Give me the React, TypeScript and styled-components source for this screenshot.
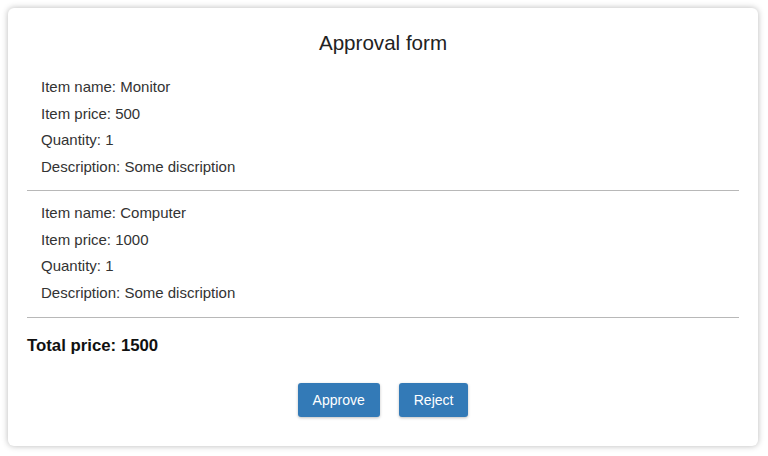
import React from "react";
import styled, { createGlobalStyle } from "styled-components";

const GlobalStyle = createGlobalStyle`
  body {
    margin: 0;
    background: #ffffff;
    font-family: "Liberation Sans", Arial, sans-serif;
  }
`;

const Page = styled.div`
  padding: 8px 10px 10px 8px;
`;

const Card = styled.div`
  width: 750px;
  height: 438px;
  box-sizing: border-box;
  background: #ffffff;
  border-radius: 6px;
  box-shadow: 0 0 6px rgba(0, 0, 0, 0.28);
  padding: 20px 19px 0 19px;
`;

const Title = styled.h2`
  margin: 0 0 6px 0;
  font-size: 20.6px;
  line-height: 30px;
  font-weight: 400;
  color: #222;
  text-align: center;
`;

const ItemGroup = styled.div`
  padding: 10px 14px;
  border-bottom: 1px solid #b8b8b8;

  & + & {
    padding-top: 9px;
    padding-bottom: 11px;
  }
`;

const ItemLine = styled.div`
  font-size: 15px;
  line-height: 26.5px;
  color: #333;
`;

const Total = styled.div`
  margin-top: 16px;
  font-size: 16.8px;
  line-height: 24px;
  font-weight: 700;
  color: #111;
`;

const Actions = styled.div`
  display: flex;
  justify-content: center;
  gap: 19px;
  margin-top: 25px;
`;

const Button = styled.button`
  height: 34px;
  padding: 0 15px;
  border: none;
  border-radius: 3px;
  background: #337ab7;
  color: #ffffff;
  font-family: "Liberation Sans", Arial, sans-serif;
  font-size: 14px;
  box-shadow: 0 1px 3px rgba(0, 0, 0, 0.25);
  cursor: pointer;
`;

type Item = {
  name: string;
  price: number;
  quantity: number;
  description: string;
};

const items: Item[] = [
  { name: "Monitor", price: 500, quantity: 1, description: "Some discription" },
  { name: "Computer", price: 1000, quantity: 1, description: "Some discription" },
];

const App = () => {
  const total = items.reduce((sum, i) => sum + i.price * i.quantity, 0);

  return (
    <>
      <GlobalStyle />
      <Page>
        <Card>
          <Title>Approval form</Title>
          {items.map((item) => (
            <ItemGroup key={item.name}>
              <ItemLine>Item name: {item.name}</ItemLine>
              <ItemLine>Item price: {item.price}</ItemLine>
              <ItemLine>Quantity: {item.quantity}</ItemLine>
              <ItemLine>Description: {item.description}</ItemLine>
            </ItemGroup>
          ))}
          <Total>Total price: {total}</Total>
          <Actions>
            <Button>Approve</Button>
            <Button>Reject</Button>
          </Actions>
        </Card>
      </Page>
    </>
  );
};

export default App;
